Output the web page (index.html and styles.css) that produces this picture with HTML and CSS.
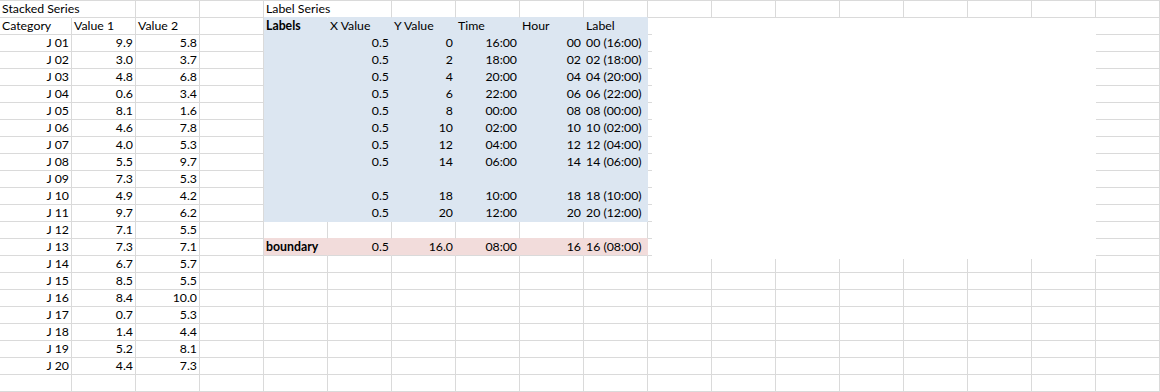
FILE: index.html
```html
<!DOCTYPE html>
<html lang="en">
<head>
<meta charset="utf-8">
<title>Sheet</title>
<link rel="stylesheet" href="styles.css">
</head>
<body>
<div class="wrap">
<table class="sheet">
<colgroup>
<col class="ca"><col class="cn"><col class="cn"><col class="cn"><col class="cn"><col class="cn"><col class="cn"><col class="cn"><col class="cn"><col class="cn"><col class="cn"><col class="cn"><col class="cn"><col class="cn"><col class="cn"><col class="cn"><col class="cn"><col class="cn">
</colgroup>
<tbody>
<tr><td class="ov">Stacked Series</td><td></td><td></td><td></td><td class="bb ov">Label Series</td><td class="bb"></td><td class="bb"></td><td class="bb"></td><td class="bb"></td><td class="bb"></td><td></td><td></td><td></td><td></td><td></td><td></td><td></td><td></td></tr>
<tr><td>Category</td><td>Value 1</td><td>Value 2</td><td></td><td class="b"><strong>Labels</strong></td><td class="b">X Value</td><td class="b">Y Value</td><td class="b">Time</td><td class="b">Hour</td><td class="b">Label</td><td></td><td></td><td></td><td></td><td></td><td></td><td></td><td></td></tr>
<tr><td class="r">J 01</td><td class="r">9.9</td><td class="r">5.8</td><td></td><td class="b"></td><td class="b r">0.5</td><td class="b r">0</td><td class="b r">16:00</td><td class="b r">00</td><td class="b">00 (16:00)</td><td></td><td></td><td></td><td></td><td></td><td></td><td></td><td></td></tr>
<tr><td class="r">J 02</td><td class="r">3.0</td><td class="r">3.7</td><td></td><td class="b"></td><td class="b r">0.5</td><td class="b r">2</td><td class="b r">18:00</td><td class="b r">02</td><td class="b">02 (18:00)</td><td></td><td></td><td></td><td></td><td></td><td></td><td></td><td></td></tr>
<tr><td class="r">J 03</td><td class="r">4.8</td><td class="r">6.8</td><td></td><td class="b"></td><td class="b r">0.5</td><td class="b r">4</td><td class="b r">20:00</td><td class="b r">04</td><td class="b">04 (20:00)</td><td></td><td></td><td></td><td></td><td></td><td></td><td></td><td></td></tr>
<tr><td class="r">J 04</td><td class="r">0.6</td><td class="r">3.4</td><td></td><td class="b"></td><td class="b r">0.5</td><td class="b r">6</td><td class="b r">22:00</td><td class="b r">06</td><td class="b">06 (22:00)</td><td></td><td></td><td></td><td></td><td></td><td></td><td></td><td></td></tr>
<tr><td class="r">J 05</td><td class="r">8.1</td><td class="r">1.6</td><td></td><td class="b"></td><td class="b r">0.5</td><td class="b r">8</td><td class="b r">00:00</td><td class="b r">08</td><td class="b">08 (00:00)</td><td></td><td></td><td></td><td></td><td></td><td></td><td></td><td></td></tr>
<tr><td class="r">J 06</td><td class="r">4.6</td><td class="r">7.8</td><td></td><td class="b"></td><td class="b r">0.5</td><td class="b r">10</td><td class="b r">02:00</td><td class="b r">10</td><td class="b">10 (02:00)</td><td></td><td></td><td></td><td></td><td></td><td></td><td></td><td></td></tr>
<tr><td class="r">J 07</td><td class="r">4.0</td><td class="r">5.3</td><td></td><td class="b"></td><td class="b r">0.5</td><td class="b r">12</td><td class="b r">04:00</td><td class="b r">12</td><td class="b">12 (04:00)</td><td></td><td></td><td></td><td></td><td></td><td></td><td></td><td></td></tr>
<tr><td class="r">J 08</td><td class="r">5.5</td><td class="r">9.7</td><td></td><td class="b"></td><td class="b r">0.5</td><td class="b r">14</td><td class="b r">06:00</td><td class="b r">14</td><td class="b">14 (06:00)</td><td></td><td></td><td></td><td></td><td></td><td></td><td></td><td></td></tr>
<tr><td class="r">J 09</td><td class="r">7.3</td><td class="r">5.3</td><td></td><td class="b"></td><td class="b"></td><td class="b"></td><td class="b"></td><td class="b"></td><td class="b"></td><td></td><td></td><td></td><td></td><td></td><td></td><td></td><td></td></tr>
<tr><td class="r">J 10</td><td class="r">4.9</td><td class="r">4.2</td><td></td><td class="b"></td><td class="b r">0.5</td><td class="b r">18</td><td class="b r">10:00</td><td class="b r">18</td><td class="b">18 (10:00)</td><td></td><td></td><td></td><td></td><td></td><td></td><td></td><td></td></tr>
<tr><td class="r">J 11</td><td class="r">9.7</td><td class="r">6.2</td><td></td><td class="b"></td><td class="b r">0.5</td><td class="b r">20</td><td class="b r">12:00</td><td class="b r">20</td><td class="b">20 (12:00)</td><td></td><td></td><td></td><td></td><td></td><td></td><td></td><td></td></tr>
<tr><td class="r">J 12</td><td class="r">7.1</td><td class="r">5.5</td><td></td><td class="bp"></td><td class="bp"></td><td class="bp"></td><td class="bp"></td><td class="bp"></td><td class="bp"></td><td></td><td></td><td></td><td></td><td></td><td></td><td></td><td></td></tr>
<tr><td class="r">J 13</td><td class="r">7.3</td><td class="r">7.1</td><td></td><td class="p"><strong>boundary</strong></td><td class="p r">0.5</td><td class="p r">16.0</td><td class="p r">08:00</td><td class="p r">16</td><td class="p">16 (08:00)</td><td></td><td></td><td></td><td></td><td></td><td></td><td></td><td></td></tr>
<tr><td class="r">J 14</td><td class="r">6.7</td><td class="r">5.7</td><td></td><td></td><td></td><td></td><td></td><td></td><td></td><td></td><td></td><td></td><td></td><td></td><td></td><td></td><td></td></tr>
<tr><td class="r">J 15</td><td class="r">8.5</td><td class="r">5.5</td><td></td><td></td><td></td><td></td><td></td><td></td><td></td><td></td><td></td><td></td><td></td><td></td><td></td><td></td><td></td></tr>
<tr><td class="r">J 16</td><td class="r">8.4</td><td class="r">10.0</td><td></td><td></td><td></td><td></td><td></td><td></td><td></td><td></td><td></td><td></td><td></td><td></td><td></td><td></td><td></td></tr>
<tr><td class="r">J 17</td><td class="r">0.7</td><td class="r">5.3</td><td></td><td></td><td></td><td></td><td></td><td></td><td></td><td></td><td></td><td></td><td></td><td></td><td></td><td></td><td></td></tr>
<tr><td class="r">J 18</td><td class="r">1.4</td><td class="r">4.4</td><td></td><td></td><td></td><td></td><td></td><td></td><td></td><td></td><td></td><td></td><td></td><td></td><td></td><td></td><td></td></tr>
<tr><td class="r">J 19</td><td class="r">5.2</td><td class="r">8.1</td><td></td><td></td><td></td><td></td><td></td><td></td><td></td><td></td><td></td><td></td><td></td><td></td><td></td><td></td><td></td></tr>
<tr><td class="r">J 20</td><td class="r">4.4</td><td class="r">7.3</td><td></td><td></td><td></td><td></td><td></td><td></td><td></td><td></td><td></td><td></td><td></td><td></td><td></td><td></td><td></td></tr>
<tr><td></td><td></td><td></td><td></td><td></td><td></td><td></td><td></td><td></td><td></td><td></td><td></td><td></td><td></td><td></td><td></td><td></td><td></td></tr>
</tbody>
</table>
<div class="chart"></div>
</div>
</body>
</html>
```

FILE: styles.css
```css
html, body {
  margin: 0;
  padding: 0;
  background: #ffffff;
  overflow: hidden;
}

.wrap {
  position: relative;
  width: 1160px;
  height: 392px;
}

.sheet {
  table-layout: fixed;
  width: 1160px;
  border-collapse: separate;
  border-spacing: 0;
  border-top: 1px solid #dadada;
  font-family: Lato, "Noto Sans", sans-serif;
  font-size: 12.3px;
  color: #000000;
}

.ca { width: 72px; }
.cn { width: 64px; }

.sheet td {
  height: 16px;
  padding: 0 2px;
  line-height: 16px;
  border-right: 1px solid #dadada;
  border-bottom: 1px solid #dadada;
  white-space: nowrap;
  overflow: visible;
  vertical-align: bottom;
  text-align: left;
}

.sheet td.r { text-align: right; }

.sheet td.ov { border-right-color: #ffffff; }

.sheet td.bb { border-bottom-color: #dce6f1; }
.sheet td.bb.ov { border-right-color: #ffffff; }

.sheet td.b {
  background: #dce6f1;
  border-right-color: #dce6f1;
  border-bottom-color: #dce6f1;
}

.sheet td.bp { border-bottom-color: #f2dcdb; }

.sheet td.p {
  background: #f2dcdb;
  border-right-color: #f2dcdb;
}

.sheet strong { font-weight: 700; }

.chart {
  position: absolute;
  left: 652px;
  top: 18px;
  width: 444px;
  height: 241px;
  background: #ffffff;
}
```
